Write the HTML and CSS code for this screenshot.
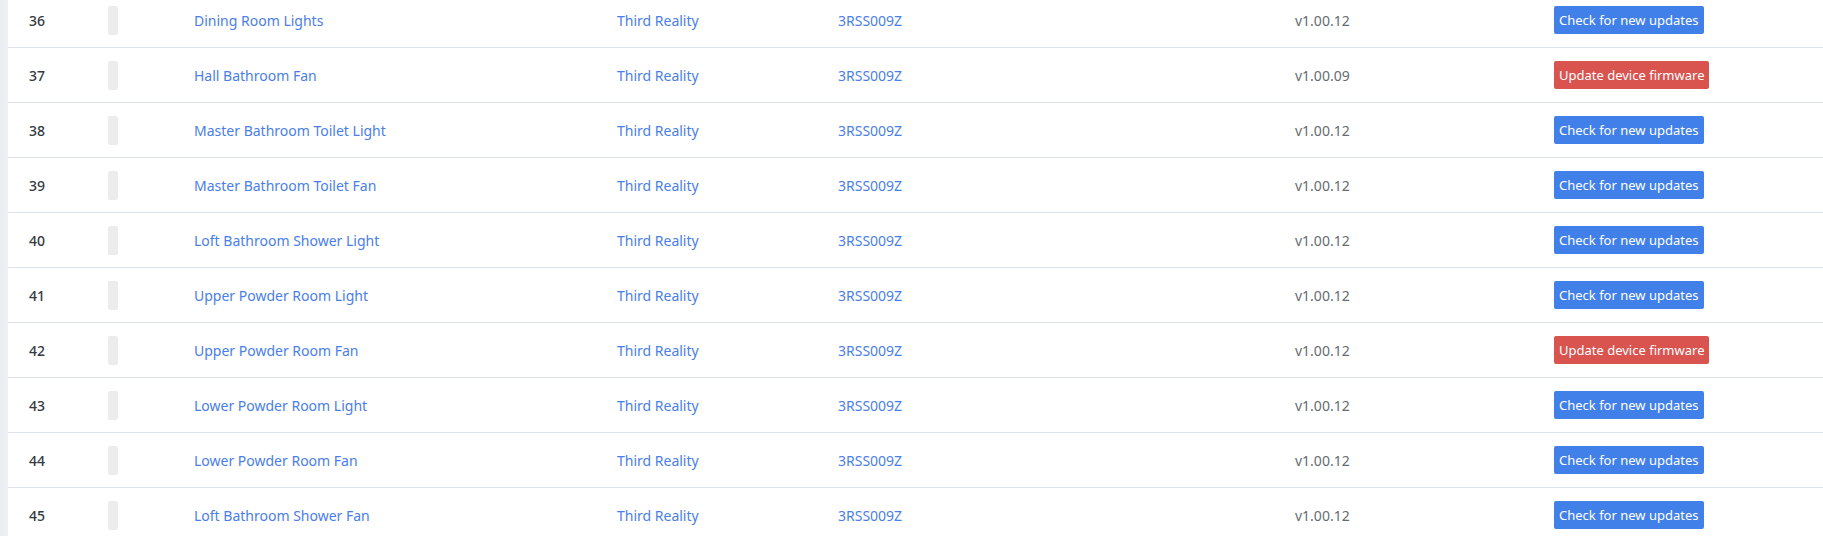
FILE: index.html
```html
<!DOCTYPE html>
<html lang="en">
<head>
<meta charset="utf-8">
<title>Devices</title>
<link rel="stylesheet" href="styles.css">
</head>
<body>
<div class="page">
  <div class="edge"></div>
  <div class="main">
    <div class="table">
      <div class="row"><div class="c num">36</div><div class="c pic"><span class="thumb"></span></div><div class="c name"><a>Dining Room Lights</a></div><div class="c mfr"><a>Third Reality</a></div><div class="c model"><a>3RSS009Z</a></div><div class="c ver">v1.00.12</div><div class="c act"><button class="btn btn-blue">Check for new updates</button></div></div>
      <div class="row"><div class="c num">37</div><div class="c pic"><span class="thumb"></span></div><div class="c name"><a>Hall Bathroom Fan</a></div><div class="c mfr"><a>Third Reality</a></div><div class="c model"><a>3RSS009Z</a></div><div class="c ver">v1.00.09</div><div class="c act"><button class="btn btn-red">Update device firmware</button></div></div>
      <div class="row"><div class="c num">38</div><div class="c pic"><span class="thumb"></span></div><div class="c name"><a>Master Bathroom Toilet Light</a></div><div class="c mfr"><a>Third Reality</a></div><div class="c model"><a>3RSS009Z</a></div><div class="c ver">v1.00.12</div><div class="c act"><button class="btn btn-blue">Check for new updates</button></div></div>
      <div class="row"><div class="c num">39</div><div class="c pic"><span class="thumb"></span></div><div class="c name"><a>Master Bathroom Toilet Fan</a></div><div class="c mfr"><a>Third Reality</a></div><div class="c model"><a>3RSS009Z</a></div><div class="c ver">v1.00.12</div><div class="c act"><button class="btn btn-blue">Check for new updates</button></div></div>
      <div class="row"><div class="c num">40</div><div class="c pic"><span class="thumb"></span></div><div class="c name"><a>Loft Bathroom Shower Light</a></div><div class="c mfr"><a>Third Reality</a></div><div class="c model"><a>3RSS009Z</a></div><div class="c ver">v1.00.12</div><div class="c act"><button class="btn btn-blue">Check for new updates</button></div></div>
      <div class="row"><div class="c num">41</div><div class="c pic"><span class="thumb"></span></div><div class="c name"><a>Upper Powder Room Light</a></div><div class="c mfr"><a>Third Reality</a></div><div class="c model"><a>3RSS009Z</a></div><div class="c ver">v1.00.12</div><div class="c act"><button class="btn btn-blue">Check for new updates</button></div></div>
      <div class="row"><div class="c num">42</div><div class="c pic"><span class="thumb"></span></div><div class="c name"><a>Upper Powder Room Fan</a></div><div class="c mfr"><a>Third Reality</a></div><div class="c model"><a>3RSS009Z</a></div><div class="c ver">v1.00.12</div><div class="c act"><button class="btn btn-red">Update device firmware</button></div></div>
      <div class="row"><div class="c num">43</div><div class="c pic"><span class="thumb"></span></div><div class="c name"><a>Lower Powder Room Light</a></div><div class="c mfr"><a>Third Reality</a></div><div class="c model"><a>3RSS009Z</a></div><div class="c ver">v1.00.12</div><div class="c act"><button class="btn btn-blue">Check for new updates</button></div></div>
      <div class="row"><div class="c num">44</div><div class="c pic"><span class="thumb"></span></div><div class="c name"><a>Lower Powder Room Fan</a></div><div class="c mfr"><a>Third Reality</a></div><div class="c model"><a>3RSS009Z</a></div><div class="c ver">v1.00.12</div><div class="c act"><button class="btn btn-blue">Check for new updates</button></div></div>
      <div class="row"><div class="c num">45</div><div class="c pic"><span class="thumb"></span></div><div class="c name"><a>Loft Bathroom Shower Fan</a></div><div class="c mfr"><a>Third Reality</a></div><div class="c model"><a>3RSS009Z</a></div><div class="c ver">v1.00.12</div><div class="c act"><button class="btn btn-blue">Check for new updates</button></div></div>
    </div>
  </div>
</div>
</body>
</html>
```
FILE: styles.css
```css
html, body {
  margin: 0;
  padding: 0;
  background: #ffffff;
  overflow: hidden;
}
body {
  font-family: "Noto Sans", "Open Sans", "Liberation Sans", sans-serif;
  font-size: 14px;
  color: #333333;
}
.page {
  display: flex;
  height: 536px;
}
.edge {
  width: 8px;
  flex: 0 0 8px;
  background: linear-gradient(to right, #e9ecf1, #eef1f5);
}
.main {
  flex: 1;
  overflow: hidden;
}
.table {
  margin-top: -7px;
}
.row {
  display: grid;
  grid-template-columns: 79px 86px 423px 221px 457px 259px 1fr;
  height: 54px;
  border-bottom: 1px solid #dfe4eb;
  align-items: center;
}
.c {
  padding-left: 21px;
  white-space: nowrap;
}
.num {
  font-weight: 500;
  color: #333a42;
}
.pic {
  display: flex;
  align-items: center;
}
.thumb {
  display: block;
  width: 10px;
  height: 29px;
  border-radius: 2px;
  background: #ececec;
}
a {
  color: #4a7ee8;
  text-decoration: none;
}
.ver {
  color: #666b70;
}
.btn {
  font-family: inherit;
  font-size: 13px;
  color: #ffffff;
  border: 0;
  border-radius: 2px;
  height: 28px;
  padding: 0 5px;
  line-height: 28px;
}
.btn-blue {
  background: #4180e8;
}
.btn-red {
  background: #d9534f;
}
```
